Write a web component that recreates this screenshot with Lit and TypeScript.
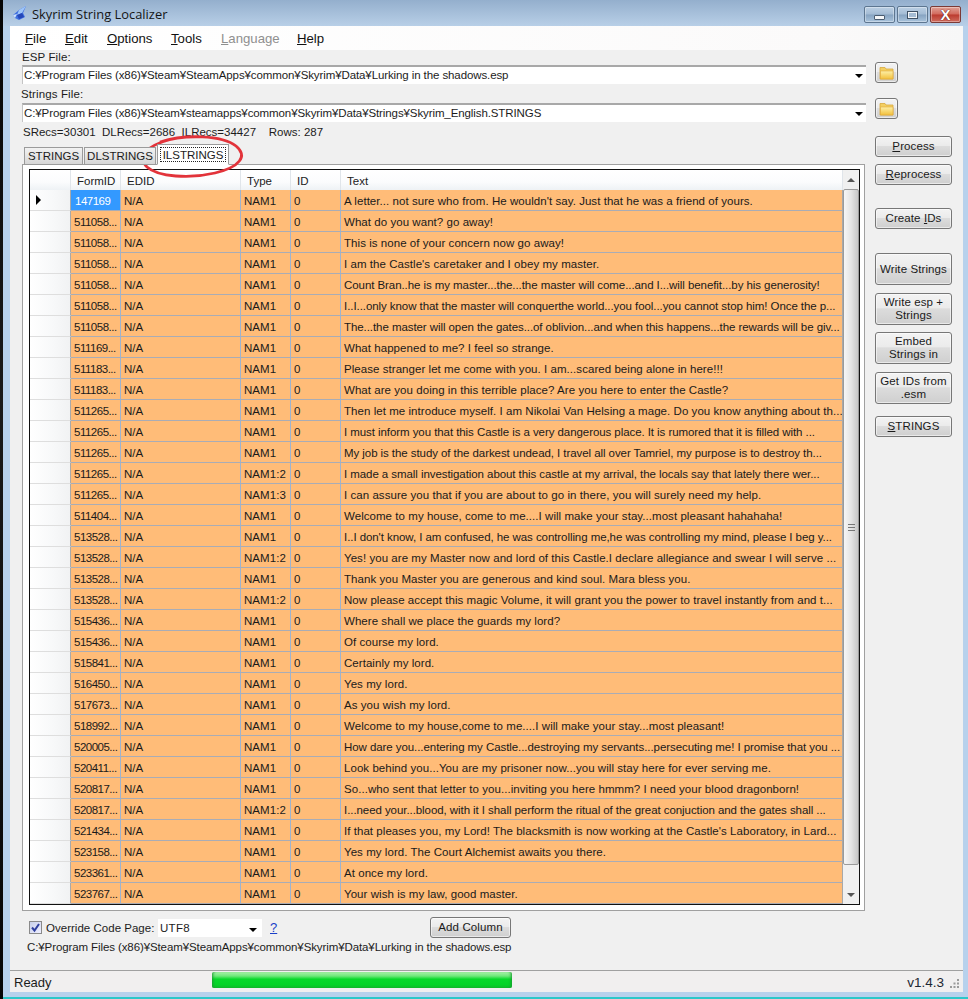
import { LitElement, html, css, svg } from "lit";
import { customElement } from "lit/decorators.js";

const rows: [string, string, string][] = [
  ["147169", "NAM1", "A letter... not sure who from. He wouldn't say. Just that he was a friend of yours."],
  ["511058...", "NAM1", "What do you want? go away!"],
  ["511058...", "NAM1", "This is none of your concern now go away!"],
  ["511058...", "NAM1", "I am the Castle's caretaker and I obey my master."],
  ["511058...", "NAM1", "Count Bran..he is my master...the...the master will come...and I...will benefit...by his generosity!"],
  ["511058...", "NAM1", "I..I...only know that the master will conquerthe world...you fool...you cannot stop him! Once the p..."],
  ["511058...", "NAM1", "The...the master will open the gates...of oblivion...and when this happens...the rewards will be giv..."],
  ["511169...", "NAM1", "What happened to me? I feel so strange."],
  ["511183...", "NAM1", "Please stranger let me come with you. I am...scared being alone in here!!!"],
  ["511183...", "NAM1", "What are you doing in this terrible place? Are you here to enter the Castle?"],
  ["511265...", "NAM1", "Then let me introduce myself. I am Nikolai Van Helsing a mage. Do you know anything about th..."],
  ["511265...", "NAM1", "I must inform you that this Castle is a very dangerous place. It is rumored that it is filled with ..."],
  ["511265...", "NAM1", "My job is the study of the darkest undead, I travel all over Tamriel, my purpose is to destroy th..."],
  ["511265...", "NAM1:2", "I made a small investigation about this castle at my arrival, the locals say that lately there wer..."],
  ["511265...", "NAM1:3", "I can assure you that if you are about to go in there, you will surely need my help."],
  ["511404...", "NAM1", "Welcome to my house, come to me....I will make your stay...most pleasant hahahaha!"],
  ["513528...", "NAM1", "I..I don't know, I am confused, he was controlling me,he was controlling my mind, please I beg y..."],
  ["513528...", "NAM1:2", "Yes! you are my Master now and lord of this Castle.I declare allegiance and swear I will serve ..."],
  ["513528...", "NAM1", "Thank you Master you are generous and kind soul. Mara bless you."],
  ["513528...", "NAM1:2", "Now please accept this magic Volume, it will grant you the power to travel instantly from and t..."],
  ["515436...", "NAM1", "Where shall we place the guards my lord?"],
  ["515436...", "NAM1", "Of course my lord."],
  ["515841...", "NAM1", "Certainly my lord."],
  ["516450...", "NAM1", "Yes my lord."],
  ["517673...", "NAM1", "As you wish my lord."],
  ["518992...", "NAM1", "Welcome to my house,come to me....I will make your stay...most pleasant!"],
  ["520005...", "NAM1", "How dare you...entering my Castle...destroying my servants...persecuting me! I promise that you ..."],
  ["520411...", "NAM1", "Look behind you...You are my prisoner now...you will stay here for ever serving me."],
  ["520817...", "NAM1", "So...who sent that letter to you...inviting you here hmmm? I need your blood dragonborn!"],
  ["520817...", "NAM1:2", "I...need your...blood, with it I shall perform the ritual of the great conjuction and the gates shall ..."],
  ["521434...", "NAM1", "If that pleases you, my Lord! The blacksmith is now working at the Castle's Laboratory, in Lard..."],
  ["523158...", "NAM1", "Yes my lord. The Court Alchemist awaits you there."],
  ["523361...", "NAM1", "At once my lord."],
  ["523767...", "NAM1", "Your wish is my law, good master."],
];

const folder = html`<svg width="15" height="14" viewBox="0 0 15 14">
  <defs>
    <linearGradient id="fg" x1="0" y1="0" x2="0" y2="1"><stop offset="0" stop-color="#fdf0a8"/><stop offset="1" stop-color="#f2c03c"/></linearGradient>
  </defs>
  <path d="M1 1.5h5l1 1.5h7v10H1z" fill="#f3cf62" stroke="#d9a93e" stroke-width="0.8"/>
  <path d="M1.5 5h12.5v8H1.5z" fill="url(#fg)" stroke="#e0a83a" stroke-width="0.6"/>
</svg>`;

@customElement("app-root")
export class AppRoot extends LitElement {
  static styles = css`
    :host { display: block; width: 968px; height: 999px; overflow: hidden; font-family: "Liberation Sans", Arial, sans-serif; font-size: 11.5px; color: #1c1c1c; }
    .screen { position: relative; display: flex; width: 968px; height: 999px; background: #0c0c0c; }
    .strip { width: 3px; flex: none; background: linear-gradient(180deg, #050505, #1a1a1a 40%, #060606); }
    .window { flex: 1; display: flex; flex-direction: column; min-width: 0; padding: 0 5px 5px 7px; box-sizing: border-box; height: 999px; background: #b7d1ec; border-bottom: 2px solid #2cc7c9; }
    .titlebar { height: 26px; flex: none; margin: 0 -5px 0 -7px; padding: 0 7px 0 9px; display: flex; align-items: center; background: linear-gradient(180deg, #94afcd, #b8cfe7); }
    .app-icon { margin-right: 4px; flex: none; }
    .title { font-family: "Open Sans", sans-serif; font-size: 12.9px; color: #151515; flex: 1; padding-top: 2px; }
    .ctrls { display: flex; gap: 2px; margin-top: 3px; }
    .ctrl { width: 31px; height: 17px; box-sizing: border-box; border: 1px solid #5d7690; border-radius: 2px; display: flex; align-items: center; justify-content: center; background: linear-gradient(180deg, #bcd0e4 0, #a3bbd4 48%, #86a3c1 52%, #a9c3dc 100%); box-shadow: inset 0 0 0 1px rgba(255,255,255,.35); }
    .ctrl.close { background: linear-gradient(180deg, #e0a297 0, #d2695c 48%, #bb3a2e 52%, #cf6c5e 100%); border-color: #7b3a36; }
    .min-g { width: 9px; height: 3px; margin-top: 5px; background: #f5f7f9; border: 1px solid #4a5c70; border-radius: 1px; }
    .max-g { width: 9px; height: 6px; border: 1px solid #3f5064; box-shadow: inset 0 0 0 1px #f2f5f8; background: #a5bcd4; }
    .close-g { color: #fff; font: bold 15px/15px "Liberation Sans", sans-serif; text-shadow: 0 0 1px #5a1a14, 0 0 1px #5a1a14; }

    .client { flex: 1; display: flex; flex-direction: column; min-height: 0; background: #f0f0f0; }
    .menu { height: 24px; flex: none; display: flex; align-items: center; background: linear-gradient(90deg, #fff, #fbfafa 85%, #f7f7f7); font-size: 13.2px; color: #111; position: relative; }
    .mi { position: absolute; top: 5px; }
    .m1 { left: 15px; } .m2 { left: 55px; } .m3 { left: 97px; } .m4 { left: 161px; } .m5 { left: 211px; color: #8f8f8f; } .m6 { left: 287px; }

    .main { flex: 1; display: flex; min-height: 0; }
    .left { width: 856px; flex: none; padding-left: 12px; box-sizing: border-box; }
    .lbl { height: 15px; line-height: 15px; letter-spacing: .12px; }
    .lbl.second { height: 19px; line-height: 20px; margin-left: -1px; }
    .combo { height: 19px; box-sizing: border-box; background: #fff; border-top: 2px solid #a8a8a8; border-left: 1px solid #c4c4c4; display: flex; align-items: center; padding-left: 1px; padding-bottom: 1px; position: relative; letter-spacing: -.1px; white-space: nowrap; }
    .arrow { position: absolute; right: 3px; top: 7px; width: 0; height: 0; border-left: 4px solid transparent; border-right: 4px solid transparent; border-top: 4px solid #000; }
    .stats { height: 23px; line-height: 21px; margin-left: 1px; white-space: pre; }

    .tabs { display: flex; height: 20px; align-items: flex-end; padding-left: 2px; gap: 1px; position: relative; z-index: 1; margin-bottom: -1px; }
    .tab { height: 18px; box-sizing: border-box; border: 1px solid #9b9b9b; border-bottom: 1px solid #9b9b9b; background: linear-gradient(180deg, #f2f2f2, #e6e6e6 45%, #d6d6d6); display: flex; align-items: center; justify-content: center; }
    .t1 { width: 59px; } .t2 { width: 72px; }
    .tab.active { height: 21px; width: 72px; background: #fff; border-bottom: 1px solid #fff; padding: 2px; }
    .focus { flex: 1; height: 100%; box-sizing: border-box; border: 1px dotted #222; display: flex; align-items: center; justify-content: center; }

    .page { width: 843px; height: 747px; box-sizing: border-box; border: 1px solid #a0a0a0; background: #fff; padding: 4px 4px 5px 6px; }
    .grid { width: 831px; height: 736px; box-sizing: border-box; border: 1px solid #111; display: flex; position: relative; background: #fff; }
    .table { width: 813px; flex: none; }
    .row { display: grid; grid-template-columns: 41px 50px 120px 50px 50px 502px; height: 21px; }
    .row.head { height: 20px; background: linear-gradient(180deg, #fff, #fbfcfd 60%, #eef2f5); }
    .hc { box-sizing: border-box; border-right: 1px solid #e0e5ea; border-bottom: 1px solid #d6dade; padding: 0 0 0 6px; line-height: 22px; color: #222; white-space: nowrap; }
    .rh { box-sizing: border-box; background: linear-gradient(90deg, #fff, #f7f8f9 60%, #f1f2f3); border-right: 1px solid #a9a9a9; border-bottom: 1px solid #dedede; display: flex; align-items: center; padding-left: 6px; }
    .tri { width: 0; height: 0; border-top: 5px solid transparent; border-bottom: 5px solid transparent; border-left: 5px solid #000; }
    .c { box-sizing: border-box; background: #ffbc78; border-right: 1px solid #9db3cf; border-bottom: 1px solid #a9acb5; padding: 0 0 0 3px; line-height: 22px; white-space: nowrap; overflow: hidden; letter-spacing: .05px; color: #1a1a1a; }
    .c.fid { letter-spacing: -.5px; }
    .c.sel { background: #3399ff; color: #fff; padding-left: 4px; }
    .c.last { border-right: 1px solid #a8a8a8; }
    .c.tight { letter-spacing: -.07px; }

    .sb { width: 16px; flex: none; background: #f0f0f0; position: relative; display: flex; flex-direction: column; align-items: stretch; }
    .sb-btn { height: 19px; flex: none; display: flex; align-items: center; justify-content: center; }
    .sb-up { width: 0; height: 0; border-left: 4px solid transparent; border-right: 4px solid transparent; border-bottom: 4px solid #555; }
    .sb-down { width: 0; height: 0; border-left: 4px solid transparent; border-right: 4px solid transparent; border-top: 4px solid #555; }
    .thumb { height: 676px; flex: none; box-sizing: border-box; border: 1px solid #9a9a9a; border-radius: 2px; background: linear-gradient(90deg, #f6f6f6, #e4e4e4 50%, #c6c6c6); display: flex; align-items: center; justify-content: center; }
    .sb-fill { flex: 1; }
    .grip { width: 7px; height: 7px; background: repeating-linear-gradient(180deg, #777 0 1px, transparent 1px 3px); }

    .opts { height: 23px; margin-top: 5px; display: flex; align-items: center; position: relative; }
    .check { margin-left: 7px; width: 13px; height: 13px; box-sizing: border-box; border: 1px solid #8a8a8a; background: linear-gradient(135deg, #c8d0ea, #eef); display: flex; align-items: center; justify-content: center; flex: none; }
    .opt-label { margin-left: 4px; width: 112px; letter-spacing: .02px; white-space: nowrap; flex: none; }
    .sel-box { width: 104px; height: 18px; box-sizing: border-box; background: #fff; padding-left: 2px; line-height: 19px; position: relative; letter-spacing: .3px; flex: none; }
    .sel-box .arrow { right: 5px; top: 9px; }
    .q { margin-left: 8px; color: #1a3fc8; text-decoration: underline; width: 160px; font-size: 13px; flex: none; }
    .path { margin-left: 5px; margin-top: 2px; line-height: 13px; letter-spacing: -.1px; white-space: nowrap; }

    .right { width: 97px; flex: none; padding-left: 9px; box-sizing: border-box; display: flex; flex-direction: column; align-items: flex-start; }
    .btn { box-sizing: border-box; width: 77px; flex: none; border: 1px solid #777; border-radius: 3px; background: linear-gradient(180deg, #f3f3f3, #ebebeb 45%, #dcdcdc 50%, #cfcfcf); display: flex; align-items: center; justify-content: center; text-align: center; line-height: 13px; letter-spacing: .1px; color: #1a1a1a; box-shadow: inset 0 0 0 1px rgba(255,255,255,.55); }
    .s { height: 21px; }
    .t { height: 32px; }
    .fb { width: 23px; height: 21px; }
    .add { width: 81px; height: 21px; flex: none; }
    .mt12 { margin-top: 12px; } .mt15 { margin-top: 15px; } .mt17 { margin-top: 17px; } .mt7 { margin-top: 7px; } .mt23 { margin-top: 23px; } .mt24 { margin-top: 24px; } .mt8 { margin-top: 8px; }

    .status { height: 21px; flex: none; border-top: 1px solid #a0a0a0; background: #f1efef; display: flex; align-items: center; position: relative; box-sizing: content-box; }
    .ready { margin-left: 4px; width: 198px; font-size: 13px; flex: none; padding-top: 1px; }
    .bar { width: 300px; height: 16px; margin-top: -3px; border-radius: 2px; background: linear-gradient(180deg, #a8f0a8 0, #6fe87a 25%, #07d82a 45%, #03d327 80%, #10b82c 100%); box-shadow: inset 3px 0 3px -2px #1a9a30, inset -3px 0 3px -2px #1a9a30; flex: none; }
    .ver { margin-left: auto; margin-right: 19px; font-size: 13.5px; color: #1d2733; padding-top: 1px; }
    .dots { position: absolute; right: 3px; bottom: 3px; }
    .ink { position: absolute; left: 0; top: 0; pointer-events: none; }
  `;

  render() {
    return html`<div class="screen">
      <div class="strip"></div>
      <div class="window">
        <div class="titlebar">
          <svg class="app-icon" width="16" height="16" viewBox="0 0 16 16">
            <path d="M1 10 L7 5 L14 1 L11 8 L13 12 L7 15 L3 13 Z" fill="#3f6fe0"/>
            <path d="M7 5 L14 1 L10 8 L5 10 Z" fill="#9fc6fa"/>
            <path d="M5 10 L10 8 L12 12 L7 14 Z" fill="#2547b8"/>
            <path d="M1 10 L5 9 L3 13 Z" fill="#cfe3fb"/>
          </svg>
          <div class="title">Skyrim String Localizer</div>
          <div class="ctrls">
            <div class="ctrl"><div class="min-g"></div></div>
            <div class="ctrl"><div class="max-g"></div></div>
            <div class="ctrl close"><div class="close-g">X</div></div>
          </div>
        </div>
        <div class="client">
          <div class="menu">
            <span class="mi m1"><u>F</u>ile</span>
            <span class="mi m2"><u>E</u>dit</span>
            <span class="mi m3"><u>O</u>ptions</span>
            <span class="mi m4"><u>T</u>ools</span>
            <span class="mi m5"><u>L</u>anguage</span>
            <span class="mi m6"><u>H</u>elp</span>
          </div>
          <div class="main">
            <div class="left">
              <div class="lbl">ESP File:</div>
              <div class="combo">C:¥Program Files (x86)¥Steam¥SteamApps¥common¥Skyrim¥Data¥Lurking in the shadows.esp<span class="arrow"></span></div>
              <div class="lbl second">Strings File:</div>
              <div class="combo">C:¥Program Files (x86)¥Steam¥steamapps¥common¥Skyrim¥Data¥Strings¥Skyrim_English.STRINGS<span class="arrow"></span></div>
              <div class="stats">SRecs=30301  DLRecs=2686  ILRecs=34427    Rows: 287</div>
              <div class="tabs">
                <div class="tab t1">STRINGS</div>
                <div class="tab t2">DLSTRINGS</div>
                <div class="tab active"><div class="focus">ILSTRINGS</div></div>
              </div>
              <div class="page">
                <div class="grid">
                  <div class="table">
                    <div class="row head">
                      <div class="hc"></div><div class="hc">FormID</div><div class="hc">EDID</div><div class="hc">Type</div><div class="hc">ID</div><div class="hc">Text</div>
                    </div>
                    ${rows.map(
                      (r, i) => html`<div class="row">
                        <div class="rh">${i === 0 ? html`<span class="tri"></span>` : ""}</div>
                        <div class="c fid ${i === 0 ? "sel" : ""}">${r[0]}</div>
                        <div class="c">N/A</div>
                        <div class="c">${r[1]}</div>
                        <div class="c">0</div>
                        <div class="c last ${r[2].length >= 99 ? "tight" : ""}">${r[2]}</div>
                      </div>`
                    )}
                  </div>
                  <div class="sb">
                    <div class="sb-btn"><span class="sb-up"></span></div>
                    <div class="thumb"><span class="grip"></span></div>
                    <div class="sb-fill"></div>
                    <div class="sb-btn"><span class="sb-down"></span></div>
                  </div>
                </div>
              </div>
              <div class="opts">
                <span class="check"><svg width="11" height="11" viewBox="0 0 11 11"><path d="M2 5.5 L4.5 8.5 L9 2" fill="none" stroke="#2f3f9e" stroke-width="2"/></svg></span>
                <span class="opt-label">Override Code Page:</span>
                <span class="sel-box">UTF8<span class="arrow"></span></span>
                <span class="q">?</span>
                <div class="btn add">Add Column</div>
              </div>
              <div class="path">C:¥Program Files (x86)¥Steam¥SteamApps¥common¥Skyrim¥Data¥Lurking in the shadows.esp</div>
            </div>
            <div class="right">
              <div class="btn fb mt12">${folder}</div>
              <div class="btn fb mt15">${folder}</div>
              <div class="btn s mt17"><span><u>P</u>rocess</span></div>
              <div class="btn s mt7"><span><u>R</u>eprocess</span></div>
              <div class="btn s mt23"><span>Create <u>I</u>Ds</span></div>
              <div class="btn t mt24">Write Strings</div>
              <div class="btn t mt8">Write esp +<br />Strings</div>
              <div class="btn t mt7">Embed<br />Strings in</div>
              <div class="btn t mt8">Get IDs from<br />.esm</div>
              <div class="btn s mt12"><span><u>S</u>TRINGS</span></div>
            </div>
          </div>
          <div class="status">
            <span class="ready">Ready</span>
            <span class="bar"></span>
            <span class="ver">v1.4.3</span>
            <svg class="dots" width="10" height="10" viewBox="0 0 10 10" fill="#9a9a9a">
              <rect x="7" y="0" width="2" height="2"/><rect x="3.5" y="3.5" width="2" height="2"/><rect x="7" y="3.5" width="2" height="2"/><rect x="0" y="7" width="2" height="2"/><rect x="3.5" y="7" width="2" height="2"/><rect x="7" y="7" width="2" height="2"/>
            </svg>
          </div>
        </div>
      </div>
      <svg class="ink" width="968" height="999" viewBox="0 0 968 999">
        ${svg`<path d="M160 142 C185 134 222 135 236 146 C248 156 240 167 215 173 C190 179 158 177 147 167 C137 157 145 146 172 139" fill="none" stroke="#e2333a" stroke-width="2.8"/>`}
      </svg>
    </div>`;
  }
}
